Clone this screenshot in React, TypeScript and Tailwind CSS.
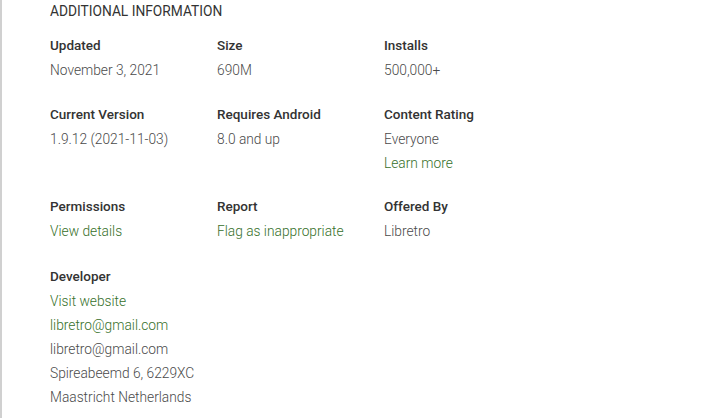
const cells: { label: string; lines: { text: string; link?: boolean }[] }[][] = [
  [
    { label: 'Updated', lines: [{ text: 'November 3, 2021' }] },
    { label: 'Size', lines: [{ text: '690M' }] },
    { label: 'Installs', lines: [{ text: '500,000+' }] },
  ],
  [
    { label: 'Current Version', lines: [{ text: '1.9.12 (2021-11-03)' }] },
    { label: 'Requires Android', lines: [{ text: '8.0 and up' }] },
    { label: 'Content Rating', lines: [{ text: 'Everyone' }, { text: 'Learn more', link: true }] },
  ],
  [
    { label: 'Permissions', lines: [{ text: 'View details', link: true }] },
    { label: 'Report', lines: [{ text: 'Flag as inappropriate', link: true }] },
    { label: 'Offered By', lines: [{ text: 'Libretro' }] },
  ],
  [
    {
      label: 'Developer',
      lines: [
        { text: 'Visit website', link: true },
        { text: 'libretro@gmail.com', link: true },
        { text: 'libretro@gmail.com' },
        { text: 'Spireabeemd 6, 6229XC' },
        { text: 'Maastricht Netherlands' },
      ],
    },
  ],
]

const rowGaps = ['mt-[9px]', 'mt-[19px]', 'mt-[18px]', 'mt-[20px]']

export default function App() {
  return (
    <div className="h-[418px] w-[708px] overflow-hidden bg-white font-['Roboto',sans-serif]">
      <div className="h-full border-l-2 border-[#d0d0d0] pl-[48px]">
        <h2 className="text-[13.75px] leading-[23px] uppercase text-[#333]">Additional Information</h2>
        {cells.map((row, i) => (
          <div key={i} className={`grid grid-cols-[167px_167px_167px] ${rowGaps[i]}`}>
            {row.map((cell) => (
              <div key={cell.label}>
                <div className="text-[13.5px] leading-[26px] font-medium text-[#333]">{cell.label}</div>
                {cell.lines.map((line, j) => (
                  <div
                    key={j}
                    className={`text-[13.75px] leading-[24px] font-light ${line.link ? 'text-[#36702a]' : 'text-[#4a4a4a]'}`}
                  >
                    {line.text}
                  </div>
                ))}
              </div>
            ))}
          </div>
        ))}
      </div>
    </div>
  )
}
